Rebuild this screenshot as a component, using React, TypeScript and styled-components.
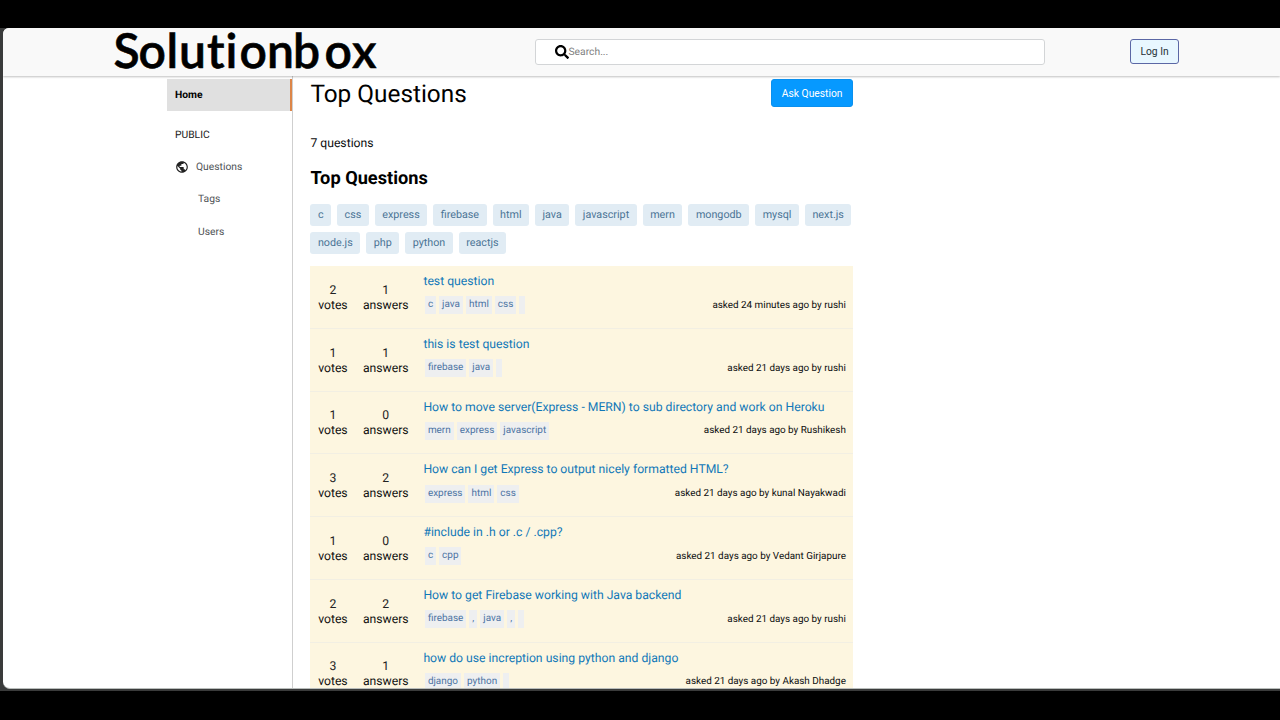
import React from "react";
import styled, { createGlobalStyle } from "styled-components";
import { FaSearch } from "react-icons/fa";
import { MdPublic } from "react-icons/md";

const GlobalStyle = createGlobalStyle`
  * { box-sizing: border-box; }
  body { margin: 0; background: #000; font-family: Roboto, "Liberation Sans", sans-serif; color: #0c0d0e; text-rendering: geometricPrecision; }
`;

const Screen = styled.div`
  width: 1280px;
  height: 720px;
  padding: 28px 0 29px;
  overflow: hidden;
  background: #000;
`;

const Frame = styled.div`
  height: 663px;
  padding: 0 0 2px 3px;
  background: #3a3b3b;
`;

const Page = styled.div`
  height: 661px;
  display: flex;
  flex-direction: column;
  overflow: hidden;
  background: #fff;
  border-bottom: 1px solid #b9bdbb;
  border-radius: 6px 0 0 7px;
`;

const Header = styled.header`
  display: flex;
  align-items: center;
  flex: 0 0 48px;
  padding-left: 110.5px;
  background: #f9f9f9;
  box-shadow: 0 1px 2px rgba(0, 0, 0, 0.25);
  z-index: 1;
`;

const Logo = styled.div`
  width: 421.5px;
  height: 48px;
  svg { display: block; overflow: visible; }
`;

const SearchBox = styled.div`
  display: flex;
  align-items: center;
  width: 510px;
  height: 26px;
  padding: 0 0 1px 18.5px;
  border: 1px solid #d3d5d7;
  border-radius: 3px;
  background: #fff;
  color: #808080;
  font-size: 10.3px;
  svg { color: #000; width: 14px; height: 14px; }
`;

const LoginButton = styled.button`
  width: 49px;
  height: 25px;
  margin: 0 0 1px 85px;
  padding: 0;
  border: 1px solid #5b67a5;
  border-radius: 3px;
  background: #e8f7ff;
  color: #263238;
  font: 400 10.3px Roboto, sans-serif;
`;

const Body = styled.div`
  display: flex;
  flex: 1;
  min-height: 0;
  padding-left: 164px;
`;

const Sidebar = styled.nav`
  flex: 0 0 126px;
  padding-top: 3px;
  border-right: 1px solid #cfcfcf;
  font-size: 10.3px;
  color: #4f5356;
`;

const HomeLink = styled.div`
  height: 32px;
  padding-left: 8px;
  line-height: 32px;
  border-right: 2.5px solid #dc8548;
  background: #e0e0e0;
  color: #000;
  font-weight: 700;
`;

const SideHeading = styled.div`
  padding: 16px 0 0 8px;
  line-height: 16px;
  color: #1a1a1a;
`;

const SideLink = styled.div<{ $first?: boolean }>`
  display: flex;
  align-items: center;
  gap: 7px;
  height: 32.3px;
  margin-top: ${(p) => (p.$first ? "7.4px" : "0")};
  padding-left: ${(p) => (p.$first ? "8px" : "31px")};
  svg { width: 14px; height: 14px; color: #222; }
`;

const Main = styled.main`
  width: 543px;
  margin-left: 17.4px;
`;

const TitleRow = styled.div`
  display: flex;
  justify-content: space-between;
  height: 48px;
  padding-top: 3px;
`;

const PageTitle = styled.h1`
  margin: 0;
  font-size: 24.35px;
  line-height: 29px;
  font-weight: 400;
  color: #000;
`;

const AskButton = styled.button`
  width: 82.5px;
  height: 28px;
  padding: 0;
  border: 1px solid #0a90ee;
  border-radius: 3px;
  background: #0699ff;
  color: #fff;
  font: 400 10.3px Roboto, sans-serif;
`;

const Count = styled.p`
  margin: 11px 0 0;
  font-size: 12.2px;
  line-height: 16px;
`;

const ListTitle = styled.h2`
  margin: 17px 0 0;
  font-size: 18.2px;
  line-height: 22px;
  font-weight: 700;
  color: #000;
`;

const TagCloud = styled.div`
  display: flex;
  flex-wrap: wrap;
  gap: 6px;
  margin-top: 14px;
  padding-bottom: 12px;
`;

const Pill = styled.span`
  height: 22px;
  padding: 0 7.5px;
  line-height: 22.6px;
  border-radius: 3px;
  background: #e1ecf4;
  color: #4c7596;
  font-size: 10.75px;
`;

const Row = styled.article`
  display: flex;
  height: 62.75px;
  padding: 8px 7.5px 0;
  border-bottom: 1px solid #f2efe3;
  background: #fdf6e0;
`;

const Stat = styled.div<{ $width: number; $gap: number }>`
  width: ${(p) => p.$width}px;
  margin-right: ${(p) => p.$gap}px;
  padding-top: 8.75px;
  font-size: 12.2px;
  line-height: 15px;
  text-align: center;
  color: #111;
  white-space: nowrap;
  div:first-child { color: #222; }
`;

const Summary = styled.div`
  flex: 1;
`;

const QuestionLink = styled.a`
  display: block;
  font-size: 12.2px;
  line-height: 15px;
  color: #1178b8;
  white-space: nowrap;
`;

const Meta = styled.div`
  display: flex;
  justify-content: space-between;
  align-items: center;
  margin-top: 7.25px;
  height: 18px;
  font-size: 9.9px;
`;

const Tags = styled.div`
  display: flex;
  gap: 3px;
  padding-left: 1.5px;
`;

const Tag = styled.span`
  height: 18px;
  min-width: 6px;
  padding: 0 3px;
  line-height: 18px;
  background: #eeeff0;
  color: #4d74a4;
  font-size: 9.95px;
`;

const cloud = ["c", "css", "express", "firebase", "html", "java", "javascript", "mern", "mongodb", "mysql", "next.js", "node.js", "php", "python", "reactjs"];

const questions = [
  { votes: 2, answers: 1, title: "test question", tags: ["c", "java", "html", "css", ""], asked: "asked 24 minutes ago by rushi" },
  { votes: 1, answers: 1, title: "this is test question", tags: ["firebase", "java", ""], asked: "asked 21 days ago by rushi" },
  { votes: 1, answers: 0, title: "How to move server(Express - MERN) to sub directory and work on Heroku", tags: ["mern", "express", "javascript"], asked: "asked 21 days ago by Rushikesh" },
  { votes: 3, answers: 2, title: "How can I get Express to output nicely formatted HTML?", tags: ["express", "html", "css"], asked: "asked 21 days ago by kunal Nayakwadi" },
  { votes: 1, answers: 0, title: "#include in .h or .c / .cpp?", tags: ["c", "cpp"], asked: "asked 21 days ago by Vedant Girjapure" },
  { votes: 2, answers: 2, title: "How to get Firebase working with Java backend", tags: ["firebase", ",", "java", ",", ""], asked: "asked 21 days ago by rushi" },
  { votes: 3, answers: 1, title: "how do use increption using python and django", tags: ["django", "python", ""], asked: "asked 21 days ago by Akash Dhadge" },
];

export default function App() {
  return (
    <Screen>
      <GlobalStyle />
      <Frame>
        <Page>
          <Header>
            <Logo>
              <svg width="280" height="48" viewBox="0 0 280 48">
                <text x="-0.5 24.5 52.5 65 93 111.5 125.5 153 179 210.5 238" y="40" fontFamily="Lato" fontSize="48" fontWeight="600" fill="#000" stroke="#000" strokeWidth="0.6">Solutionbox</text>
              </svg>
            </Logo>
            <SearchBox><FaSearch />Search...</SearchBox>
            <LoginButton>Log In</LoginButton>
          </Header>
          <Body>
            <Sidebar>
              <HomeLink>Home</HomeLink>
              <SideHeading>PUBLIC</SideHeading>
              <SideLink $first><MdPublic />Questions</SideLink>
              <SideLink>Tags</SideLink>
              <SideLink>Users</SideLink>
            </Sidebar>
            <Main>
              <TitleRow>
                <PageTitle>Top Questions</PageTitle>
                <AskButton>Ask Question</AskButton>
              </TitleRow>
              <Count>7 questions</Count>
              <ListTitle>Top Questions</ListTitle>
              <TagCloud>{cloud.map((t) => <Pill key={t}>{t}</Pill>)}</TagCloud>
              {questions.map((q) => (
                <Row key={q.title}>
                  <Stat $width={30} $gap={15}><div>{q.votes}</div><div>votes</div></Stat>
                  <Stat $width={45.5} $gap={15}><div>{q.answers}</div><div>answers</div></Stat>
                  <Summary>
                    <QuestionLink>{q.title}</QuestionLink>
                    <Meta>
                      <Tags>{q.tags.map((t, i) => <Tag key={i}>{t}</Tag>)}</Tags>
                      <span>{q.asked}</span>
                    </Meta>
                  </Summary>
                </Row>
              ))}
            </Main>
          </Body>
        </Page>
      </Frame>
    </Screen>
  );
}
